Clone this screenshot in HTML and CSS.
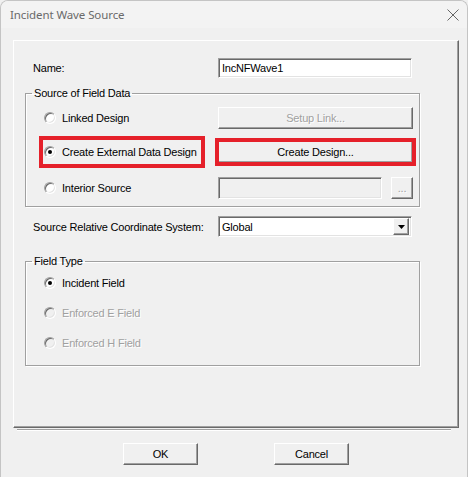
FILE: index.html
```html
<!DOCTYPE html>
<html lang="en">
<head>
  <meta charset="UTF-8">
  <title>Incident Wave Source</title>
  <link rel="stylesheet" href="styles.css">
</head>
<body>

  <div class="window">
    <div class="titlebar">
      <span class="title">Incident Wave Source</span>
      <svg class="close" width="12" height="12" viewBox="0 0 12 12">
        <path d="M0.5 0.5L11.5 11.5M11.5 0.5L0.5 11.5" stroke="#555" stroke-width="0.9" fill="none"/>
      </svg>
    </div>

    <div class="client">
      <div class="panel">

        <div class="field-row name-row">
          <span class="field-label">Name:</span>
          <div class="textbox name-box">IncNFWave1</div>
        </div>

        <fieldset class="group source-group">
          <legend>Source of Field Data</legend>

          <div class="opt-row first">
            <div class="radio-cell">
              <span class="radio"><span class="circle"></span>Linked Design</span>
            </div>
            <div class="btn wide disabled">Setup Link...</div>
          </div>

          <div class="opt-row second">
            <div class="radio-cell">
              <span class="radio marked"><span class="circle checked"></span>Create External Data Design</span>
            </div>
            <div class="btn wide marked-btn">Create Design...</div>
          </div>

          <div class="opt-row third">
            <div class="radio-cell">
              <span class="radio"><span class="circle"></span>Interior Source</span>
            </div>
            <div class="textbox off path-box"></div>
            <div class="btn dots disabled">...</div>
          </div>
        </fieldset>

        <div class="field-row coord-row">
          <span class="field-label">Source Relative Coordinate System:</span>
          <div class="textbox combo">
            <span class="combo-text">Global</span>
            <span class="combo-arrow">
              <svg width="7" height="4" viewBox="0 0 7 4"><path d="M0 0H7L3.5 4Z" fill="#000"/></svg>
            </span>
          </div>
        </div>

        <fieldset class="group field-group">
          <legend>Field Type</legend>
          <div class="opt-row">
            <div class="radio-cell">
              <span class="radio"><span class="circle checked"></span>Incident Field</span>
            </div>
          </div>
          <div class="opt-row">
            <div class="radio-cell">
              <span class="radio off"><span class="circle"></span>Enforced E Field</span>
            </div>
          </div>
          <div class="opt-row">
            <div class="radio-cell">
              <span class="radio off"><span class="circle"></span>Enforced H Field</span>
            </div>
          </div>
        </fieldset>

      </div>

      <div class="separator"></div>

      <div class="actions">
        <div class="btn action">OK</div>
        <div class="btn action">Cancel</div>
      </div>
    </div>
  </div>

</body>
</html>
```

FILE: styles.css
```css
body {
  margin: 0;
  background: #f0f0f0;
  font-family: "Liberation Sans", Arial, sans-serif;
  font-size: 11px;
  letter-spacing: -0.2px;
  color: #000;
}

.window {
  width: 468px;
  height: 477px;
  box-sizing: border-box;
  border: 1px solid #c4c4c4;
  border-bottom: none;
  border-radius: 8px 8px 0 0;
  background: #f0f0f0;
  overflow: hidden;
}

.titlebar {
  height: 27px;
  display: flex;
  align-items: center;
  padding-left: 9px;
  background: #f3f3f3;
}

.title {
  font-family: "Noto Sans", sans-serif;
  font-size: 11.5px;
  letter-spacing: -0.1px;
  color: #6a6a6a;
}

.close {
  margin-left: auto;
  margin-right: 8px;
}

.client {
  padding-top: 12px;
}

.panel {
  margin-left: 12px;
  width: 446px;
  height: 388px;
  box-sizing: border-box;
  border: 1px solid;
  border-color: #fff #696969 #696969 #fff;
  box-shadow: inset -1px -1px 0 #a0a0a0;
}

.field-row {
  display: flex;
  align-items: center;
  padding-left: 19px;
}

.field-label {
  width: 185px;
}

.name-row {
  margin-top: 17px;
  height: 20px;
}

.textbox {
  box-sizing: border-box;
  background: #fff;
  border: 1px solid;
  border-color: #a0a0a0 #fff #fff #a0a0a0;
  box-shadow: inset 1px 1px 0 #696969, inset -1px -1px 0 #e3e3e3;
  padding-left: 3px;
  display: flex;
  align-items: center;
}

.name-box {
  width: 194px;
  height: 20px;
}

.textbox.off {
  background: #f0f0f0;
}

.group {
  margin: 0 0 0 11px;
  padding: 0;
  width: 395px;
  min-width: 0;
  box-sizing: border-box;
  border: 1px solid #a0a0a0;
  box-shadow: 1px 1px 0 #fff, inset 1px 1px 0 #fff;
}

.group legend {
  margin-left: 6px;
  padding: 0 2px;
  line-height: 13px;
}

.source-group {
  margin-top: 9px;
  padding-bottom: 7px;
}

.opt-row {
  display: flex;
  align-items: center;
  height: 22px;
}

.source-group .first { margin-top: 7px; }
.source-group .second { margin-top: 12px; }
.source-group .third { margin-top: 14px; }

.radio-cell {
  width: 192px;
  padding-left: 18px;
  box-sizing: border-box;
  display: flex;
  align-items: center;
  height: 100%;
}

.radio {
  display: inline-flex;
  align-items: center;
  height: 100%;
  line-height: 13px;
}

.radio.marked {
  padding-right: 3px;
  outline: 4px solid #e5202a;
  outline-offset: 1px;
}

.circle {
  width: 12px;
  height: 12px;
  box-sizing: border-box;
  border-radius: 50%;
  border: 1px solid;
  border-color: #a0a0a0 #fff #fff #a0a0a0;
  box-shadow: inset 1px 1px 0 #696969, inset -1px -1px 0 #e3e3e3;
  background: #fff;
  margin-right: 6px;
  display: flex;
  align-items: center;
  justify-content: center;
}

.circle.checked::after {
  content: "";
  width: 4px;
  height: 4px;
  border-radius: 50%;
  background: #000;
}

.radio.off {
  color: #a0a0a0;
  text-shadow: 1px 1px 0 #fff;
}

.radio.off .circle {
  background: #f0f0f0;
}

.btn {
  box-sizing: border-box;
  height: 22px;
  background: #f0f0f0;
  border: 1px solid;
  border-color: #fff #696969 #696969 #fff;
  box-shadow: inset -1px -1px 0 #a0a0a0;
  display: flex;
  align-items: center;
  justify-content: center;
}

.btn.disabled {
  color: #a0a0a0;
  text-shadow: 1px 1px 0 #fff;
}

.btn.wide {
  width: 195px;
}

.btn.marked-btn {
  outline: 4px solid #e5202a;
  outline-offset: -1px;
}

.path-box {
  width: 164px;
  height: 22px;
}

.btn.dots {
  width: 22px;
  margin-left: 9px;
}

.coord-row {
  margin-top: 9px;
  height: 21px;
}

.combo {
  width: 194px;
  height: 21px;
  padding: 2px 2px 2px 3px;
}

.combo-text {
  flex: 1;
}

.combo-arrow {
  width: 16px;
  height: 17px;
  box-sizing: border-box;
  background: #f0f0f0;
  border: 1px solid;
  border-color: #fff #696969 #696969 #fff;
  box-shadow: inset -1px -1px 0 #a0a0a0;
  display: flex;
  align-items: center;
  justify-content: center;
}

.field-group {
  margin-top: 18px;
  padding-bottom: 11px;
}

.field-group .opt-row {
  margin-top: 8px;
}

.field-group .opt-row:first-of-type {
  margin-top: 4px;
}

.separator {
  margin: 1px 0 0 16px;
  width: 434px;
  height: 1px;
  background: #a0a0a0;
  border-bottom: 1px solid #fff;
}

.actions {
  display: flex;
  gap: 76px;
  padding-left: 122px;
  margin-top: 12px;
}

.btn.action {
  width: 75px;
}
```
